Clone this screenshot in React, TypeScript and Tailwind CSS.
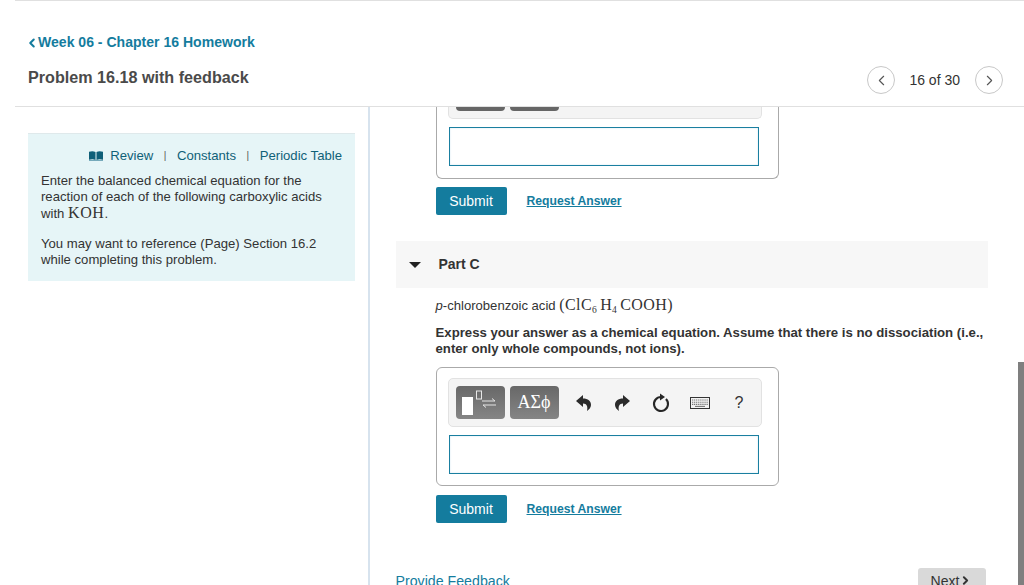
import { ChevronLeft, ChevronRight } from "lucide-react";

const Mathy: React.FC<{ children: React.ReactNode; className?: string }> = ({ children, className = "" }) => (
  <span className={`font-['Liberation_Serif',serif] ${className}`}>{children}</span>
);

const BookIcon = () => (
  <svg width="14" height="10" viewBox="0 0 14 10" className="mr-[7px]">
    <path d="M0 .8C2.4 0 4.6 0 6.5 1v8C4.6 8 2.4 8 0 8.8zM14 .8C11.6 0 9.4 0 7.5 1v8c1.900-1 4.100-1 6.500-.2z" fill="#0f5f78" />
    <path d="M0 9.200h14v.8H0z" fill="#5a98ac" />
  </svg>
);

const TemplateIcon = () => (
  <svg width="36" height="26" viewBox="0 0 36 26">
    <rect x="0" y="7" width="11" height="18" fill="#fff" />
    <rect x="14.500" y="1" width="5" height="8" fill="none" stroke="#e8e8e8" strokeWidth="1" />
    <path d="M20 11h13l-3-2.500M34 15H21l3 2.500" fill="none" stroke="#e4e4e4" strokeWidth="1" />
  </svg>
);

const ArrowIcon: React.FC<{ flip?: boolean; className?: string }> = ({ flip, className = "" }) => (
  <svg width="15" height="16" viewBox="0 0 15 16" className={`${flip ? "-scale-x-100" : ""} ${className}`}>
    <path d="M0 6L7 0V3.500C12 3.500 15 6 15 10C15 12.500 13 14.500 11 16C12 12 11 8.500 7 8.500V12Z" fill="#2b2b2b" />
  </svg>
);

const ResetIcon = () => (
  <svg width="20" height="22" viewBox="0 0 20 22">
    <path d="M10 5A7 7 0 1 0 14.950 7.050" fill="none" stroke="#262626" strokeWidth="2.100" />
    <path d="M9 1.500V8.500L14 5Z" fill="#262626" />
  </svg>
);

const KeyboardIcon = () => (
  <svg width="20" height="12" viewBox="0 0 20 12">
    <rect x="0.500" y="0.500" width="19" height="11" fill="#f2f2f2" stroke="#333" />
    <path d="M2 3h16M2 5.200h16M2 7.400h16" stroke="#777" strokeWidth="1.100" strokeDasharray="1.200 .7" />
    <path d="M5 9.400h10" stroke="#777" strokeWidth="1.100" />
  </svg>
);

const EditorInput = () => (
  <div className="mt-2 ml-px w-[310px] h-[39px] border border-[#1a7fa0] bg-white shadow-[inset_0_0_2px_#cfe3ee]" />
);

const AnswerActions = () => (
  <div className="flex items-center">
    <button className="w-[71px] h-[28px] rounded-[2px] bg-[#147c9e] text-white text-[14px] leading-[28px] text-center">
      Submit
    </button>
    <a className="ml-5 text-[12.2px] font-bold text-[#147c9e] underline">Request Answer</a>
  </div>
);

const Toolbar = () => (
  <div className="flex items-center w-[314px] h-[49px] pl-[7px] border border-[#e2e2e2] rounded-[5px] bg-[#f4f4f4]">
    <div className="flex items-center justify-center w-[49px] h-[33px] rounded-[4px] bg-linear-to-b from-[#686868] to-[#858585]">
      <TemplateIcon />
    </div>
    <div className="flex items-center justify-center w-[49px] h-[33px] ml-[5px] rounded-[4px] bg-linear-to-b from-[#686868] to-[#858585]">
      <Mathy className="text-[18px] text-white">{"AΣϕ"}</Mathy>
    </div>
    <ArrowIcon className="ml-[17px]" />
    <ArrowIcon flip className="ml-[24px]" />
    <div className="ml-[21px]"><ResetIcon /></div>
    <div className="ml-[19px]"><KeyboardIcon /></div>
    <span className="ml-[25px] text-[16px] text-[#333]">?</span>
  </div>
);

export default function App() {
  return (
    <div className="relative w-[1024px] h-[585px] overflow-hidden bg-white text-[#333] font-['Liberation_Sans',Arial,sans-serif]">
      <header className="ml-[15px] h-[107px] border-y border-[#e0e0e0] pl-[13px] pr-[21px]">
        <div className="flex items-center pt-[33px] h-[50px] text-[14.05px] font-bold text-[#147c9e]">
          <ChevronLeft size={14} strokeWidth={3.5} className="-ml-[3px] -mr-px" />
          <span>Week 06 - Chapter 16 Homework</span>
        </div>
        <div className="flex items-center justify-between mt-[9px] h-[34px]">
          <h1 className="text-[16.15px] font-bold text-[#4a4a4a]">Problem 16.18 with feedback</h1>
          <div className="flex items-center mt-[6px] text-[14px]">
            <span className="flex items-center justify-center w-[28px] h-[28px] ml-px rounded-full border border-[#c8c8c8]">
              <ChevronLeft size={17} strokeWidth={1.6} className="text-[#555]" />
            </span>
            <span className="ml-[14px] mr-[15px]">16 of 30</span>
            <span className="flex items-center justify-center w-[28px] h-[28px] rounded-full border border-[#c8c8c8]">
              <ChevronRight size={17} strokeWidth={1.6} className="text-[#555]" />
            </span>
          </div>
        </div>
      </header>

      <div className="flex h-[478px]">
        <aside className="w-[369.5px] shrink-0 border-r-2 border-[#d7e3ee] pl-[28px] pt-[26px]">
          <div className="w-[327px] h-[148px] bg-[#e6f5f7] border-t border-[#dfe9eb] pt-[14px] px-[13px] text-[13.13px] leading-[16px]">
            <div className="flex items-center justify-end text-[#0f6178] text-[13.15px] h-[16px]">
              <BookIcon />
              <span>Review</span>
              <span className="mx-[10.5px] text-[10px] text-[#555]">|</span>
              <span>Constants</span>
              <span className="mx-[10.5px] text-[10px] text-[#555]">|</span>
              <span>Periodic Table</span>
            </div>
            <p className="mt-[9px]">
              Enter the balanced chemical equation for the reaction of each of the following carboxylic acids with{" "}
              <Mathy className="text-[16px] leading-none tracking-[0.6px]">KOH</Mathy>.
            </p>
            <p className="mt-[14px]">You may want to reference (Page) Section 16.2 while completing this problem.</p>
          </div>
        </aside>

        <main className="flex-1 pl-[26px] pr-[36px] overflow-hidden">
          <div className="ml-[40px] w-[343px] h-[72px] border-x border-b border-[#aaa] rounded-b-[6px] px-[11px]">
            <div className="flex w-[314px] h-[12px] gap-[5px] pl-[7px] border-x border-b border-[#e2e2e2] rounded-b-[5px] bg-[#f4f4f4]">
              <div className="w-[49px] h-[4px] rounded-b-[4px] bg-[#666]" />
              <div className="w-[49px] h-[4px] rounded-b-[4px] bg-[#666]" />
            </div>
            <EditorInput />
          </div>
          <div className="ml-[40px] mt-[8px]"><AnswerActions /></div>

          <div className="flex items-center w-[592px] h-[47px] mt-[26px] bg-[#f7f7f7] pl-[13px]">
            <span className="w-0 h-0 border-x-[6px] border-x-transparent border-t-[6px] border-t-[#222]" />
            <span className="ml-[18px] text-[14px] font-bold">Part C</span>
          </div>

          <div className="ml-[40px]">
            <p className="mt-[7px] h-[20px] text-[13.1px] leading-[20px] whitespace-nowrap">
              <i>p</i>-chlorobenzoic acid{" "}
              <Mathy className="text-[16px] tracking-[0.4px]">
                (ClC<sub className="text-[9.5px] align-[-1px] leading-none">6</sub>
                <span className="ml-[3px]">H</span>
                <sub className="text-[9.5px] align-[-1px] leading-none">4</sub>
                <span className="ml-[3px]">COOH)</span>
              </Mathy>
            </p>
            <p className="mt-[10px] w-[552px] text-[13.2px] leading-[16px] font-bold">
              Express your answer as a chemical equation. Assume that there is no dissociation (i.e., enter only whole compounds, not ions).
            </p>
            <div className="mt-[10px] w-[343px] h-[119px] border border-[#aaa] rounded-[6px] pt-[10px] px-[11px]">
              <Toolbar />
              <EditorInput />
            </div>
            <div className="mt-[9px]"><AnswerActions /></div>
          </div>

          <div className="flex justify-between w-[590px] mt-[45px]">
            <a className="mt-[5px] text-[14.2px] leading-[16px] text-[#147c9e]">Provide Feedback</a>
            <button className="flex items-start justify-center w-[68px] h-[30px] pt-[5px] rounded-[3px] bg-[#d9d9d9] text-[14px] leading-[16px]">
              Next
              <ChevronRight size={13} strokeWidth={3.5} className="mt-[1px]" />
            </button>
          </div>
        </main>
      </div>

      <div className="absolute right-0 top-[362px] w-[6px] h-[223px] bg-[#7f7f7f]" />
    </div>
  );
}
